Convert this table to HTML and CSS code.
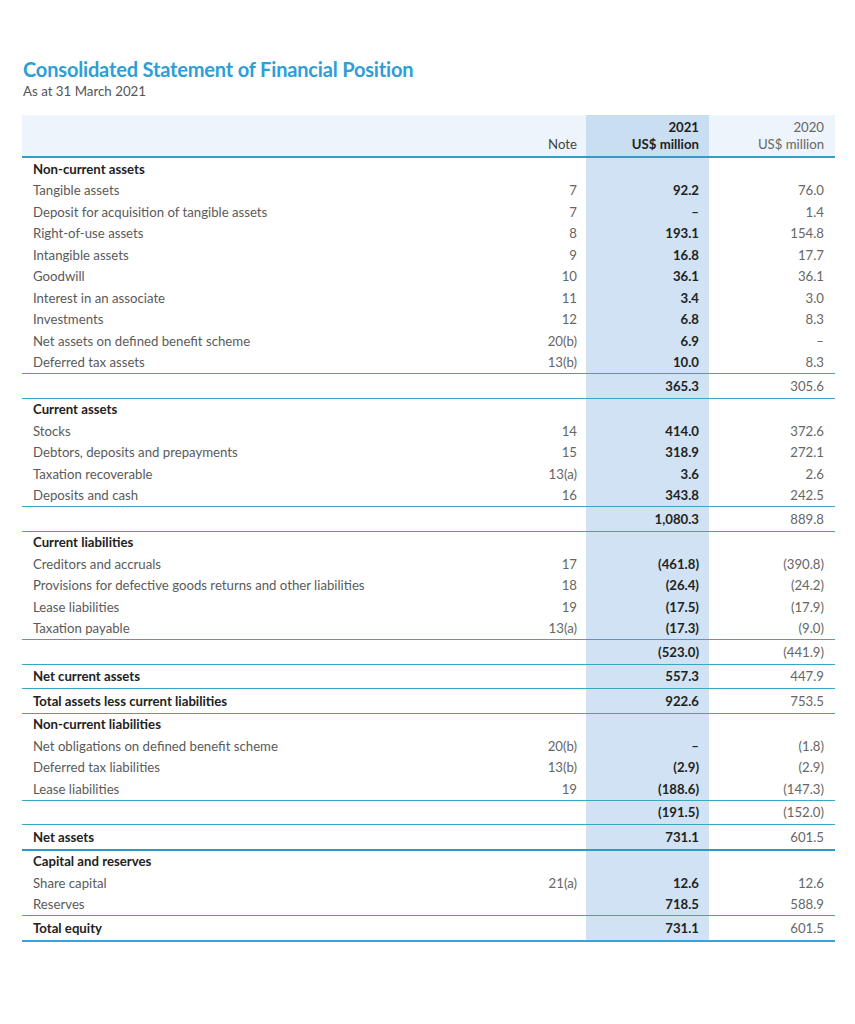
FILE: index.html
```html
<!DOCTYPE html>
<html>
<head>
<meta charset="utf-8">
<link rel="stylesheet" href="styles.css">
</head>
<body>
<div class="page">
  <h1 class="title">Consolidated Statement of Financial Position</h1>
  <p class="subtitle">As at 31 March 2021</p>
  <table class="fs">
    <colgroup>
      <col class="c-label"><col class="c-note"><col class="c-cur"><col class="c-prev">
    </colgroup>
    <thead>
      <tr>
        <th class="label"></th>
        <th class="note">Note</th>
        <th class="cur"><b>2021</b><br><b>US$ million</b></th>
        <th class="prev">2020<br>US$ million</th>
      </tr>
    </thead>
    <tbody>
      <tr class="head"><td class="label">Non-current assets</td><td class="note"></td><td class="cur"></td><td class="prev"></td></tr>
      <tr><td class="label">Tangible assets</td><td class="note">7</td><td class="cur">92.2</td><td class="prev">76.0</td></tr>
      <tr><td class="label">Deposit for acquisition of tangible assets</td><td class="note">7</td><td class="cur">–</td><td class="prev">1.4</td></tr>
      <tr><td class="label">Right-of-use assets</td><td class="note">8</td><td class="cur">193.1</td><td class="prev">154.8</td></tr>
      <tr><td class="label">Intangible assets</td><td class="note">9</td><td class="cur">16.8</td><td class="prev">17.7</td></tr>
      <tr><td class="label">Goodwill</td><td class="note">10</td><td class="cur">36.1</td><td class="prev">36.1</td></tr>
      <tr><td class="label">Interest in an associate</td><td class="note">11</td><td class="cur">3.4</td><td class="prev">3.0</td></tr>
      <tr><td class="label">Investments</td><td class="note">12</td><td class="cur">6.8</td><td class="prev">8.3</td></tr>
      <tr><td class="label">Net assets on defined benefit scheme</td><td class="note">20(b)</td><td class="cur">6.9</td><td class="prev">–</td></tr>
      <tr><td class="label">Deferred tax assets</td><td class="note">13(b)</td><td class="cur">10.0</td><td class="prev">8.3</td></tr>
      <tr class="total"><td class="label"></td><td class="note"></td><td class="cur">365.3</td><td class="prev">305.6</td></tr>

      <tr class="head"><td class="label">Current assets</td><td class="note"></td><td class="cur"></td><td class="prev"></td></tr>
      <tr><td class="label">Stocks</td><td class="note">14</td><td class="cur">414.0</td><td class="prev">372.6</td></tr>
      <tr><td class="label">Debtors, deposits and prepayments</td><td class="note">15</td><td class="cur">318.9</td><td class="prev">272.1</td></tr>
      <tr><td class="label">Taxation recoverable</td><td class="note">13(a)</td><td class="cur">3.6</td><td class="prev">2.6</td></tr>
      <tr><td class="label">Deposits and cash</td><td class="note">16</td><td class="cur">343.8</td><td class="prev">242.5</td></tr>
      <tr class="total"><td class="label"></td><td class="note"></td><td class="cur">1,080.3</td><td class="prev">889.8</td></tr>

      <tr class="head"><td class="label">Current liabilities</td><td class="note"></td><td class="cur"></td><td class="prev"></td></tr>
      <tr><td class="label">Creditors and accruals</td><td class="note">17</td><td class="cur">(461.8)</td><td class="prev">(390.8)</td></tr>
      <tr><td class="label">Provisions for defective goods returns and other liabilities</td><td class="note">18</td><td class="cur">(26.4)</td><td class="prev">(24.2)</td></tr>
      <tr><td class="label">Lease liabilities</td><td class="note">19</td><td class="cur">(17.5)</td><td class="prev">(17.9)</td></tr>
      <tr><td class="label">Taxation payable</td><td class="note">13(a)</td><td class="cur">(17.3)</td><td class="prev">(9.0)</td></tr>
      <tr class="total"><td class="label"></td><td class="note"></td><td class="cur">(523.0)</td><td class="prev">(441.9)</td></tr>
      <tr class="total"><td class="label strong">Net current assets</td><td class="note"></td><td class="cur">557.3</td><td class="prev">447.9</td></tr>
      <tr class="total"><td class="label strong">Total assets less current liabilities</td><td class="note"></td><td class="cur">922.6</td><td class="prev">753.5</td></tr>

      <tr class="head"><td class="label">Non-current liabilities</td><td class="note"></td><td class="cur"></td><td class="prev"></td></tr>
      <tr><td class="label">Net obligations on defined benefit scheme</td><td class="note">20(b)</td><td class="cur">–</td><td class="prev">(1.8)</td></tr>
      <tr><td class="label">Deferred tax liabilities</td><td class="note">13(b)</td><td class="cur">(2.9)</td><td class="prev">(2.9)</td></tr>
      <tr><td class="label">Lease liabilities</td><td class="note">19</td><td class="cur">(188.6)</td><td class="prev">(147.3)</td></tr>
      <tr class="total"><td class="label"></td><td class="note"></td><td class="cur">(191.5)</td><td class="prev">(152.0)</td></tr>
      <tr class="total thick"><td class="label strong">Net assets</td><td class="note"></td><td class="cur">731.1</td><td class="prev">601.5</td></tr>

      <tr class="head"><td class="label">Capital and reserves</td><td class="note"></td><td class="cur"></td><td class="prev"></td></tr>
      <tr><td class="label">Share capital</td><td class="note">21(a)</td><td class="cur">12.6</td><td class="prev">12.6</td></tr>
      <tr><td class="label">Reserves</td><td class="note"></td><td class="cur">718.5</td><td class="prev">588.9</td></tr>
      <tr class="total final"><td class="label strong">Total equity</td><td class="note"></td><td class="cur">731.1</td><td class="prev">601.5</td></tr>
    </tbody>
  </table>
</div>
</body>
</html>
```

FILE: styles.css
```css
html, body {
  margin: 0;
  padding: 0;
  background: #ffffff;
}
body {
  font-family: Lato, "Open Sans", "Liberation Sans", sans-serif;
  color: #555;
}
.page {
  padding: 57px 20px 0 22px;
}
.title {
  margin: 0 0 0 1px;
  font-size: 20px;
  font-weight: 700;
  color: #2c9ed8;
  line-height: 24px;
  letter-spacing: -0.17px;
}
.subtitle {
  margin: 1px 0 0 1px;
  font-size: 13.3px;
  line-height: 18px;
  color: #555;
}
.fs {
  margin-top: 15px;
  width: 813px;
  border-collapse: collapse;
  table-layout: fixed;
  font-size: 13.2px;
}
.c-label { width: 478px; }
.c-note { width: 86px; }
.c-cur { width: 123px; }
.c-prev { width: 126px; }

.fs th {
  height: 38px;
  background: #edf4fb;
  border-bottom: 2px solid #2f9dc8;
  font-weight: 400;
  line-height: 17px;
  vertical-align: bottom;
  padding: 0 0 3px 0;
  color: #444;
}
.fs th.cur { background: #c9def1; color: #222; }
.fs th b { font-weight: 700; }

.fs td {
  height: 21.5px;
  padding: 0;
  line-height: 16px;
  vertical-align: middle;
  white-space: nowrap;
}
.fs .label { padding-left: 11px; text-align: left; }
.fs .note { text-align: right; padding-right: 9px; }
.fs .cur { text-align: right; padding-right: 10px; background: #d0e2f3; font-weight: 700; color: #222; }
.fs .prev { text-align: right; padding-right: 11px; font-weight: 400; color: #666; }
.fs td.note { font-weight: 400; color: #666; }
.fs td.label { font-weight: 400; color: #5a5a5a; }
.fs tr.head td.label, .fs td.label.strong { font-weight: 700; color: #222; }

.fs tr.total td {
  height: 23.5px;
  border-top: 1px solid #3aa6c4;
  border-bottom: 1px solid #3aa6c4;
}
.fs tr.total.thick td { border-bottom: 2px solid #2a9bc8; }
.fs tr.final td { border-bottom: 2px solid #33a3e3; }
```
